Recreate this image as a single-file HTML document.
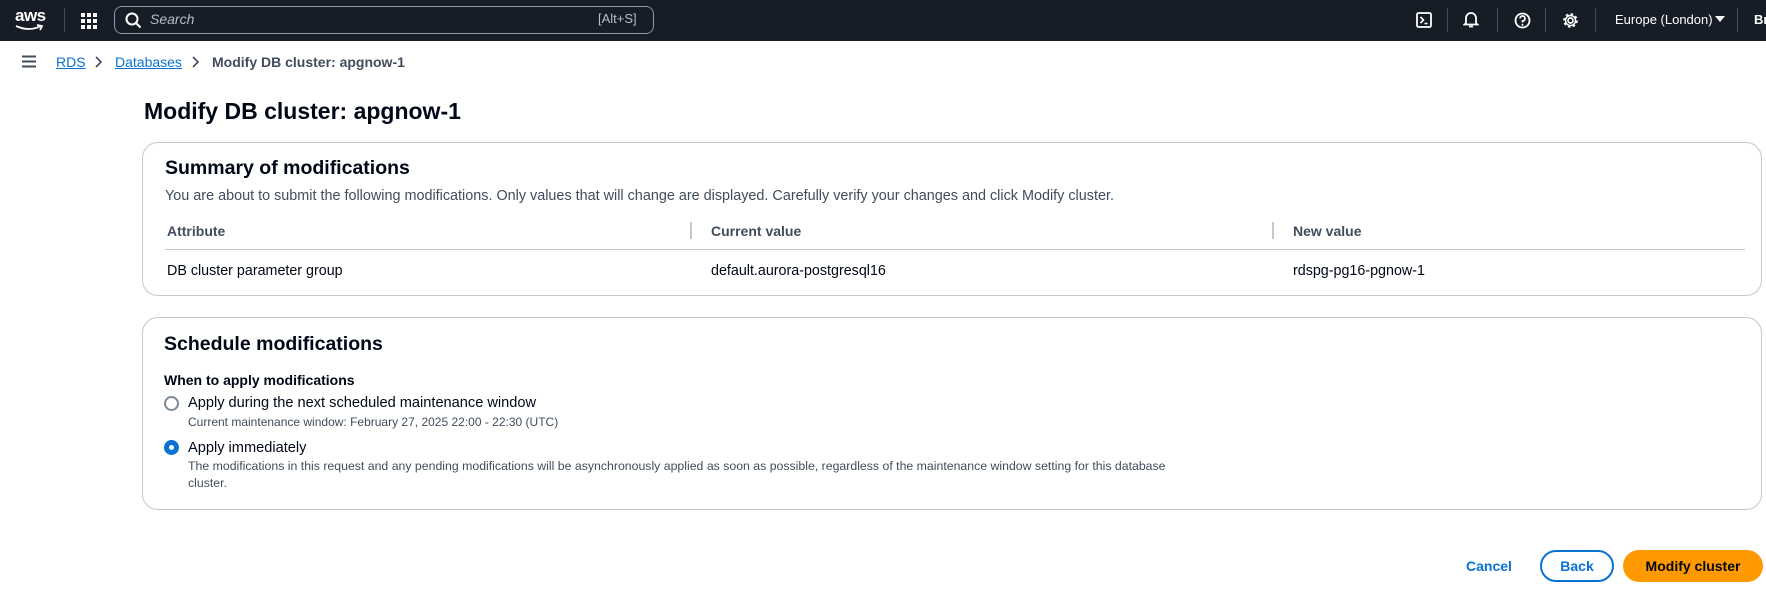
<!DOCTYPE html>
<html><head><meta charset="utf-8"><style>
*{box-sizing:border-box;margin:0;padding:0}
body{width:1766px;height:592px;overflow:hidden;background:#fff;font-family:"Liberation Sans",Arial,sans-serif;color:#000716;position:relative}
.a{position:absolute;white-space:nowrap}
.nav{position:absolute;left:0;top:0;width:1766px;height:41px;background:#161d26}
.vd{position:absolute;top:8px;width:1px;height:24px;background:#414d5c}
.card{position:absolute;left:142px;width:1620px;border:1px solid #c6c6cd;border-radius:16px}
.link{color:#0972d3;text-decoration:underline}
</style></head><body>
<div class="nav">
  <div class="a" style="left:15px;top:6px;color:#fff;font-size:17px;font-weight:bold;letter-spacing:-0.5px">aws</div>
  <svg class="a" style="left:15px;top:24px" width="30" height="8"><path d="M1 2 Q14 8 26 2 M22 1 L27 2 L25 6" stroke="#fff" stroke-width="1.8" fill="none"/></svg>
  <div class="vd" style="left:64px"></div>
  <svg class="a" style="left:81px;top:13px" width="16" height="16" fill="#fff"><rect x="0" y="0" width="4" height="4"/><rect x="6" y="0" width="4" height="4"/><rect x="12" y="0" width="4" height="4"/><rect x="0" y="6" width="4" height="4"/><rect x="6" y="6" width="4" height="4"/><rect x="12" y="6" width="4" height="4"/><rect x="0" y="12" width="4" height="4"/><rect x="6" y="12" width="4" height="4"/><rect x="12" y="12" width="4" height="4"/></svg>
  <div class="a" style="left:114px;top:6px;width:540px;height:28px;border:1.5px solid #8d99a8;border-radius:8px"></div>
  <svg class="a" style="left:125px;top:12px" width="17" height="17"><circle cx="7" cy="7" r="5.5" stroke="#fff" stroke-width="2" fill="none"/><path d="M11 11 L15.5 15.5" stroke="#fff" stroke-width="2"/></svg>
  <div class="a" style="left:150px;top:11px;color:#b6bec9;font-size:14px;font-style:italic">Search</div>
  <div class="a" style="left:598px;top:11px;color:#b6bec9;font-size:13px">[Alt+S]</div>
  <svg class="a" style="left:1416px;top:12px" width="16" height="16"><rect x="1" y="1" width="14" height="14" rx="1.5" stroke="#fff" stroke-width="1.8" fill="none"/><path d="M4.5 5 L7.5 8 L4.5 11 M8.5 11.5 H11.5" stroke="#fff" stroke-width="1.6" fill="none"/></svg>
  <div class="vd" style="left:1447px"></div>
  <svg class="a" style="left:1463px;top:11px" width="16" height="18"><path d="M3 12 V7 A5 5 0 0 1 13 7 V12 L14.5 13.5 H1.5 Z M6 15.5 H10" stroke="#fff" stroke-width="1.8" fill="none"/></svg>
  <div class="vd" style="left:1497px"></div>
  <svg class="a" style="left:1514px;top:12px" width="17" height="17"><circle cx="8.5" cy="8.5" r="7" stroke="#fff" stroke-width="1.8" fill="none"/><path d="M6 6.5 A2.5 2.5 0 1 1 8.5 9 V10.5" stroke="#fff" stroke-width="1.7" fill="none"/><circle cx="8.5" cy="12.8" r="1" fill="#fff"/></svg>
  <div class="vd" style="left:1545px"></div>
  <svg class="a" style="left:1562px;top:12px" width="17" height="17"><circle cx="8.5" cy="8.5" r="2.5" stroke="#fff" stroke-width="1.7" fill="none"/><circle cx="8.5" cy="8.5" r="6" stroke="#fff" stroke-width="2.6" stroke-dasharray="2.4 2.3" fill="none"/><circle cx="8.5" cy="8.5" r="5" stroke="#fff" stroke-width="1.4" fill="none"/></svg>
  <div class="vd" style="left:1595px"></div>
  <div class="a" style="left:1615px;top:12px;color:#fff;font-size:13px">Europe (London)</div>
  <svg class="a" style="left:1715px;top:16px" width="10" height="8"><path d="M0 0 H10 L5 6 Z" fill="#fff"/></svg>
  <div class="vd" style="left:1737px"></div>
  <div class="a" style="left:1754px;top:12px;color:#fff;font-size:13px;font-weight:bold">Br</div>
</div>
<svg class="a" style="left:22px;top:55px" width="14" height="13"><path d="M0 1.5H14M0 6.5H14M0 11.5H14" stroke="#414d5c" stroke-width="2"/></svg>
<div class="a" style="left:56px;top:54px;font-size:14px"><span class="link">RDS</span></div>
<svg class="a" style="left:95px;top:56px" width="8" height="12"><path d="M1 1 L6 6 L1 11" stroke="#414d5c" stroke-width="1.6" fill="none"/></svg>
<div class="a" style="left:115px;top:54px;font-size:14px"><span class="link">Databases</span></div>
<svg class="a" style="left:192px;top:56px" width="8" height="12"><path d="M1 1 L6 6 L1 11" stroke="#414d5c" stroke-width="1.6" fill="none"/></svg>
<div class="a" style="left:212px;top:54px;font-size:14px;font-weight:bold;color:#414d5c">Modify DB cluster: apgnow-1</div>
<div class="a" style="left:144px;top:98px;font-size:23px;font-weight:bold">Modify DB cluster: apgnow-1</div>

<div class="card" style="top:142px;height:154px"></div>
<div class="a" style="left:165px;top:157px;font-size:19.5px;font-weight:bold">Summary of modifications</div>
<div class="a" style="left:165px;top:188px;font-size:14.4px;color:#414d5c">You are about to submit the following modifications. Only values that will change are displayed. Carefully verify your changes and click Modify cluster.</div>
<div class="a" style="left:167px;top:223px;font-size:14px;font-weight:bold;color:#414d5c">Attribute</div>
<div class="a" style="left:690px;top:222px;width:2px;height:17px;background:#c6c6cd"></div>
<div class="a" style="left:711px;top:223px;font-size:14px;font-weight:bold;color:#414d5c">Current value</div>
<div class="a" style="left:1272px;top:222px;width:2px;height:17px;background:#c6c6cd"></div>
<div class="a" style="left:1293px;top:223px;font-size:14px;font-weight:bold;color:#414d5c">New value</div>
<div class="a" style="left:165px;top:249px;width:1580px;height:1px;background:#c6c6cd"></div>
<div class="a" style="left:167px;top:263px;font-size:14.3px">DB cluster parameter group</div>
<div class="a" style="left:711px;top:263px;font-size:14.3px">default.aurora-postgresql16</div>
<div class="a" style="left:1293px;top:263px;font-size:14.3px">rdspg-pg16-pgnow-1</div>

<div class="card" style="top:317px;height:193px"></div>
<div class="a" style="left:164px;top:333px;font-size:19.5px;font-weight:bold">Schedule modifications</div>
<div class="a" style="left:164px;top:372px;font-size:14px;font-weight:bold">When to apply modifications</div>
<div class="a" style="left:164px;top:396px;width:15px;height:15px;border:2px solid #7d8998;border-radius:50%"></div>
<div class="a" style="left:188px;top:395px;font-size:14.6px">Apply during the next scheduled maintenance window</div>
<div class="a" style="left:188px;top:415px;font-size:12px;color:#414d5c">Current maintenance window: February 27, 2025 22:00 - 22:30 (UTC)</div>
<div class="a" style="left:164px;top:440px;width:15px;height:15px;border-radius:50%;background:#0972d3"></div>
<div class="a" style="left:169px;top:445px;width:5px;height:5px;border-radius:50%;background:#fff"></div>
<div class="a" style="left:188px;top:440px;font-size:14.6px">Apply immediately</div>
<div class="a" style="left:188px;top:459px;font-size:12.3px;color:#414d5c">The modifications in this request and any pending modifications will be asynchronously applied as soon as possible, regardless of the maintenance window setting for this database</div>
<div class="a" style="left:188px;top:476px;font-size:12.3px;color:#414d5c">cluster.</div>

<div class="a" style="left:1466px;top:558px;font-size:14px;font-weight:bold;color:#0972d3">Cancel</div>
<div class="a" style="left:1540px;top:550px;width:74px;height:32px;border:2px solid #0972d3;border-radius:16px;color:#0972d3;font-size:14px;font-weight:bold;text-align:center;line-height:28px">Back</div>
<div class="a" style="left:1623px;top:550px;width:140px;height:32px;background:#ff9900;border-radius:16px;font-size:14px;font-weight:bold;text-align:center;line-height:32px">Modify cluster</div>
</body></html>
